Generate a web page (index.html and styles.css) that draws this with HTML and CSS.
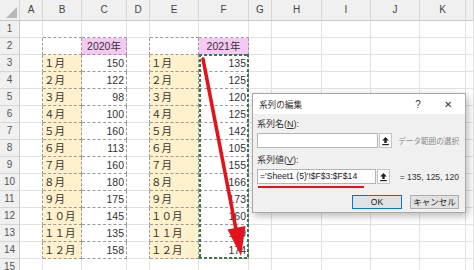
FILE: index.html
```html
<!DOCTYPE html>
<html lang="ja">
<head>
<meta charset="utf-8">
<link rel="stylesheet" href="styles.css">
</head>
<body>
<div class="sheet">
  <div class="row hdr">
    <div class="corner"><svg width="20" height="20" viewBox="0 0 20 20"><polygon points="17,7 17,18 6,18" fill="#b8b8b8"/></svg></div>
    <div>A</div><div>B</div><div>C</div><div>D</div><div>E</div><div>F</div><div>G</div><div>H</div><div>I</div><div>J</div><div>K</div><div></div>
  </div>
  <div class="row"><div class="rh">1</div><div></div><div class="tt"></div><div class="tt"></div><div></div><div class="tt"></div><div class="tt"></div><div></div><div></div><div></div><div></div><div></div><div></div></div>
  <div class="row"><div class="rh">2</div><div class="tl"></div><div class="t"></div><div class="t p">2020年</div><div class="tl"></div><div class="t"></div><div class="t p">2021年</div><div></div><div></div><div></div><div></div><div></div><div></div></div>
  <div class="row"><div class="rh">3</div><div class="tl"></div><div class="t y">１月</div><div class="t n">150</div><div class="tl"></div><div class="t y">１月</div><div class="t n">135</div><div></div><div></div><div></div><div></div><div></div><div></div></div>
  <div class="row"><div class="rh">4</div><div class="tl"></div><div class="t y">２月</div><div class="t n">122</div><div class="tl"></div><div class="t y">２月</div><div class="t n">125</div><div></div><div></div><div></div><div></div><div></div><div></div></div>
  <div class="row"><div class="rh">5</div><div class="tl"></div><div class="t y">３月</div><div class="t n">98</div><div class="tl"></div><div class="t y">３月</div><div class="t n">120</div><div></div><div></div><div></div><div></div><div></div><div></div></div>
  <div class="row"><div class="rh">6</div><div class="tl"></div><div class="t y">４月</div><div class="t n">100</div><div class="tl"></div><div class="t y">４月</div><div class="t n">125</div><div></div><div></div><div></div><div></div><div></div><div></div></div>
  <div class="row"><div class="rh">7</div><div class="tl"></div><div class="t y">５月</div><div class="t n">160</div><div class="tl"></div><div class="t y">５月</div><div class="t n">142</div><div></div><div></div><div></div><div></div><div></div><div></div></div>
  <div class="row"><div class="rh">8</div><div class="tl"></div><div class="t y">６月</div><div class="t n">113</div><div class="tl"></div><div class="t y">６月</div><div class="t n">105</div><div></div><div></div><div></div><div></div><div></div><div></div></div>
  <div class="row"><div class="rh">9</div><div class="tl"></div><div class="t y">７月</div><div class="t n">160</div><div class="tl"></div><div class="t y">７月</div><div class="t n">155</div><div></div><div></div><div></div><div></div><div></div><div></div></div>
  <div class="row"><div class="rh">10</div><div class="tl"></div><div class="t y">８月</div><div class="t n">180</div><div class="tl"></div><div class="t y">８月</div><div class="t n">166</div><div></div><div></div><div></div><div></div><div></div><div></div></div>
  <div class="row"><div class="rh">11</div><div class="tl"></div><div class="t y">９月</div><div class="t n">175</div><div class="tl"></div><div class="t y">９月</div><div class="t n">173</div><div></div><div></div><div></div><div></div><div></div><div></div></div>
  <div class="row"><div class="rh">12</div><div class="tl"></div><div class="t y">１０月</div><div class="t n">145</div><div class="tl"></div><div class="t y">１０月</div><div class="t n">160</div><div></div><div></div><div></div><div></div><div></div><div></div></div>
  <div class="row"><div class="rh">13</div><div class="tl"></div><div class="t y">１１月</div><div class="t n">135</div><div class="tl"></div><div class="t y">１１月</div><div class="t n">139</div><div></div><div></div><div></div><div></div><div></div><div></div></div>
  <div class="row"><div class="rh">14</div><div class="tl"></div><div class="t y">１２月</div><div class="t n">158</div><div class="tl"></div><div class="t y">１２月</div><div class="t n">174</div><div></div><div></div><div></div><div></div><div></div><div></div></div>
  <div class="row"><div class="rh">15</div><div></div><div></div><div></div><div></div><div></div><div></div><div></div><div></div><div></div><div></div><div></div><div></div></div>

  <div class="ants"></div>

  <svg class="arrow" width="474" height="270" viewBox="0 0 474 270">
    <line x1="203" y1="59" x2="236.5" y2="232" stroke="#e3131b" stroke-width="3.6" stroke-linecap="round"/>
    <polygon points="241,256 227.5,229.5 245.5,226" fill="#e3131b"/>
  </svg>

  <div class="dlg">
    <div class="dlg-title">
      <span class="ttl">系列の編集</span>
      <span class="tq">?</span>
      <span class="tx">✕</span>
    </div>
    <div class="dlg-body">
      <div class="lbl">系列名(<u>N</u>):</div>
      <div class="frow">
        <div class="inp"></div>
        <div class="rbtn"><svg width="9" height="10" viewBox="0 0 9 10"><path d="M4.5 1 L1.2 4.6 H3.3 V7 H5.7 V4.6 H7.8 Z" fill="#222"/><rect x="1.2" y="8" width="6.6" height="1.2" fill="#222"/></svg></div>
        <span class="hint">データ範囲の選択</span>
      </div>
      <div class="lbl lbl2">系列値(<u>V</u>):</div>
      <div class="frow">
        <div class="inp">='Sheet1 (5)'!$F$3:$F$14</div>
        <div class="rbtn"><svg width="9" height="10" viewBox="0 0 9 10"><path d="M4.5 1 L1.2 4.6 H3.3 V7 H5.7 V4.6 H7.8 Z" fill="#222"/><rect x="1.2" y="8" width="6.6" height="1.2" fill="#222"/></svg></div>
        <span class="val">= 135, 125, 120</span>
      </div>
      <div class="redline"></div>
      <div class="btns">
        <div class="btn ok">OK</div>
        <div class="btn cancel">キャンセル</div>
      </div>
    </div>
  </div>
</div>
</body>
</html>
```
FILE: styles.css
```css
html, body {
  margin: 0;
  padding: 0;
}
body {
  width: 474px;
  height: 270px;
  overflow: hidden;
  background: #fff;
  font-family: "Liberation Sans", "Noto Sans CJK JP", sans-serif;
}
.sheet {
  position: relative;
  width: 474px;
  height: 270px;
  overflow: hidden;
}
.row {
  display: grid;
  grid-template-columns: 20px 23px 39px 45px 23px 49px 50px 23px 50px 49px 49px 46px 8px;
  height: 17px;
}
.row > div {
  box-sizing: border-box;
  border-right: 1px solid #e2e2e2;
  border-bottom: 1px solid #e2e2e2;
  font-size: 10.5px;
  line-height: 16px;
  color: #333;
  white-space: nowrap;
  overflow: hidden;
  padding: 0 1px;
}
.row.hdr {
  height: 21px;
}
.row.hdr > div {
  background: #f0f0f0;
  border-right-color: #d6d6d6;
  border-bottom-color: #c8c8c8;
  text-align: center;
  line-height: 20px;
  font-size: 10px;
  color: #444;
}
.row.hdr > .corner {
  padding: 0;
  line-height: 0;
}
.row > .rh {
  background: #f0f0f0;
  border-right-color: #c8c8c8;
  border-bottom-color: #d6d6d6;
  text-align: center;
  font-size: 10px;
  color: #555;
  padding: 0;
}
.row > .t {
  border-right: 1px dashed #9a9a9a;
  border-bottom: 1px dashed #9a9a9a;
}
.row > .tl {
  border-right: 1px dashed #9a9a9a;
}
.row > .tt {
  border-bottom: 1px dashed #9a9a9a;
}
.row > .y {
  background: #fff1cc;
}
.row > .p {
  background: #f6c9f4;
  text-align: center;
}
.row > .n {
  text-align: right;
  padding-right: 2px;
}

.ants {
  position: absolute;
  left: 199px;
  top: 54px;
  width: 50px;
  height: 205px;
  background:
    repeating-linear-gradient(90deg, #3e7452 0 3px, transparent 3px 5px) left top / 100% 2px no-repeat,
    repeating-linear-gradient(90deg, #3e7452 0 3px, transparent 3px 5px) left bottom / 100% 2px no-repeat,
    repeating-linear-gradient(180deg, #3e7452 0 3px, transparent 3px 5px) left top / 2px 100% no-repeat,
    repeating-linear-gradient(180deg, #3e7452 0 3px, transparent 3px 5px) right top / 2px 100% no-repeat;
}

.arrow {
  position: absolute;
  left: 0;
  top: 0;
}

.dlg {
  position: absolute;
  left: 252px;
  top: 93px;
  width: 214px;
  height: 120px;
  box-sizing: border-box;
  border: 1px solid #a8a8a8;
  background: #f0f0f0;
  box-shadow: 2px 3px 8px rgba(0, 0, 0, 0.28);
  display: flex;
  flex-direction: column;
  color: #333;
}
.dlg-title {
  height: 20px;
  flex: none;
  background: #fff;
  display: flex;
  align-items: center;
  padding-left: 6px;
  font-size: 8.6px;
}
.ttl {
  flex: 1;
}
.tq, .tx {
  width: 30px;
  text-align: center;
  font-size: 10px;
  color: #333;
}
.tx {
  margin-right: 2px;
  font-size: 10px;
}
.dlg-body {
  padding: 3px 6px 0 4px;
  display: flex;
  flex-direction: column;
}
.lbl {
  font-size: 9px;
  line-height: 14px;
}
.lbl u {
  text-decoration: underline;
}
.lbl2 {
  margin-top: 5px;
}
.frow {
  display: flex;
  align-items: center;
  height: 15px;
  margin-top: 2px;
}
.inp {
  box-sizing: border-box;
  width: 123px;
  height: 15px;
  border: 1px solid #b4b4b4;
  background: #fff;
  font-size: 8.6px;
  line-height: 13px;
  padding-left: 2px;
  white-space: nowrap;
  overflow: hidden;
  color: #222;
}
.rbtn {
  box-sizing: border-box;
  width: 13px;
  height: 15px;
  margin-left: 1px;
  border: 1px solid #c4c4c4;
  background: #fff;
  display: flex;
  align-items: center;
  justify-content: center;
}
.hint {
  margin-left: 6px;
  font-size: 7.6px;
  color: #8a8a8a;
  white-space: nowrap;
}
.val {
  margin-left: 10px;
  font-size: 8.5px;
  color: #333;
  white-space: nowrap;
}
.redline {
  margin-top: 2px;
  margin-left: 1px;
  width: 106px;
  height: 2px;
  background: #e3131b;
}
.btns {
  display: flex;
  justify-content: flex-end;
  gap: 8px;
  margin-top: 7px;
}
.btn {
  box-sizing: border-box;
  height: 14px;
  border: 1px solid #adadad;
  background: #e1e1e1;
  font-size: 8.5px;
  line-height: 12px;
  text-align: center;
  color: #222;
}
.ok {
  width: 50px;
  border-color: #0078d7;
}
.cancel {
  width: 49px;
}
```
